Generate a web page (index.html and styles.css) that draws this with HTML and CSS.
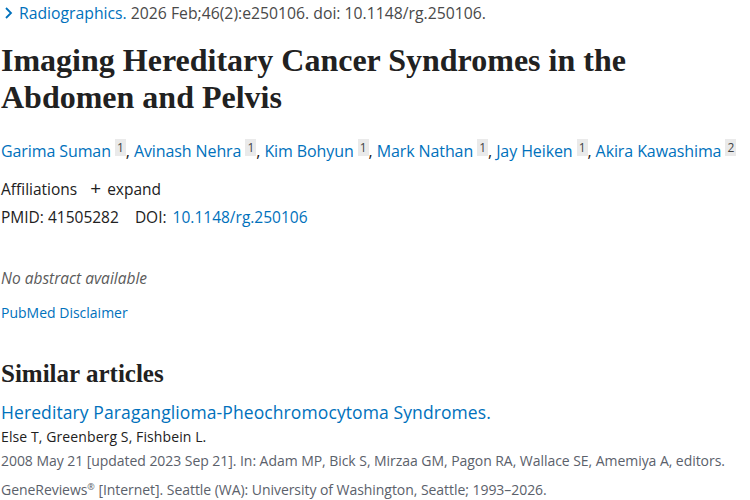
FILE: index.html
```html
<!DOCTYPE html>
<html>
<head>
<meta charset="utf-8">
<link rel="stylesheet" href="styles.css">
</head>
<body>
<main class="article">
  <div class="journal"><svg class="chev" width="10" height="14" viewBox="0 0 10 14"><path d="M2 2 L7 7 L2 12" fill="none" stroke="#0071bc" stroke-width="1.8"/></svg><a class="link" href="#">Radiographics.</a> 2026 Feb;46(2):e250106. doi: 10.1148/rg.250106.</div>
  <h1 class="title">Imaging Hereditary Cancer Syndromes in the Abdomen and Pelvis</h1>
  <div class="authors">
    <a class="link" href="#">Garima Suman</a> <sup class="aff">1</sup>, <a class="link" href="#">Avinash Nehra</a> <sup class="aff">1</sup>, <a class="link" href="#">Kim Bohyun</a> <sup class="aff">1</sup>, <a class="link" href="#">Mark Nathan</a> <sup class="aff">1</sup>, <a class="link" href="#">Jay Heiken</a> <sup class="aff">1</sup>, <a class="link" href="#">Akira Kawashima</a> <sup class="aff">2</sup>
  </div>
  <div class="affil">Affiliations <span class="expand"><span class="plus">+</span> expand</span></div>
  <div class="ids">PMID: 41505282 <span class="doi">DOI: <a class="link" href="#">10.1148/rg.250106</a></span></div>
  <p class="noabs">No abstract available</p>
  <a class="disclaimer link" href="#">PubMed Disclaimer</a>
  <h2 class="similar">Similar articles</h2>
  <a class="sim-title link" href="#">Hereditary Paraganglioma-Pheochromocytoma Syndromes.</a>
  <div class="sim-authors">Else T, Greenberg S, Fishbein L.</div>
  <div class="sim-cit">2008 May 21 [updated 2023 Sep 21]. In: Adam MP, Bick S, Mirzaa GM, Pagon RA, Wallace SE, Amemiya A, editors.</div>
  <div class="sim-cit">GeneReviews<sup class="reg">®</sup> [Internet]. Seattle (WA): University of Washington, Seattle; 1993–2026.</div>
</main>
</body>
</html>
```
FILE: styles.css
```css
html, body { margin: 0; padding: 0; background: #fff; }
body { font-family: "Open Sans", "Noto Sans", sans-serif; color: #212121; }
.article { padding: 0 0 0 1px; display: flex; flex-direction: column; align-items: flex-start; }
.link { color: #0071bc; text-decoration: none; }
.journal { font-size: 15.75px; line-height: 20px; padding-top: 3px; color: #494949; white-space: nowrap; }
.chev { margin: 0 5px 0 3px; vertical-align: -1px; }
.title { font-family: "Liberation Serif", serif; font-weight: bold; font-size: 32px; line-height: 37px; margin: 19px 0 0 0; color: #212121; max-width: 700px; }
.authors { font-size: 16px; line-height: 22px; margin-top: 24px; letter-spacing: -0.1px; color: #212121; white-space: nowrap; }
.aff { background: #eaeaea; color: #444; font-size: 12px; line-height: 14px; padding: 0 2px; vertical-align: 5px; letter-spacing: 0; }
.affil { font-size: 15.5px; margin-top: 15px; line-height: 22px; }
.expand { margin-left: 9px; }
.plus { font-size: 19px; margin-right: 2px; }
.ids { font-size: 15.5px; margin-top: 6px; line-height: 22px; }
.doi { margin-left: 12px; }
.doi .link { margin-left: 2px; }
.noabs { font-style: italic; color: #5b5b5b; font-size: 15.5px; margin: 39px 0 0 0; line-height: 22px; }
.disclaimer { font-size: 14px; margin-top: 14px; line-height: 20px; }
.similar { font-family: "Liberation Serif", serif; font-weight: bold; font-size: 25px; margin: 36px 0 0 0; line-height: 30px; }
.sim-title { font-size: 17.5px; margin-top: 11px; line-height: 24px; letter-spacing: 0.1px; }
.sim-authors { font-size: 14px; margin-top: 2px; line-height: 22px; letter-spacing: 0.1px; }
.sim-cit { font-size: 14px; color: #5b616b; line-height: 26px; letter-spacing: -0.05px; white-space: nowrap; }
.reg { font-size: 9px; vertical-align: 5px; }
```
